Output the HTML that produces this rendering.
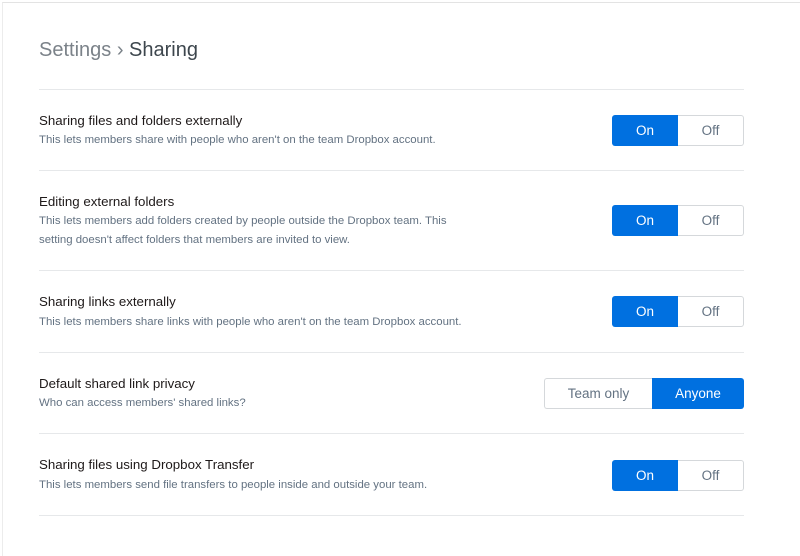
<!DOCTYPE html>
<html><head><style>
body{margin:0;width:800px;height:556px;background:#fff;font-family:"Liberation Sans",Arial,sans-serif;position:relative;overflow:hidden}
.frame{position:absolute;left:2px;top:2px;right:0;bottom:0;border-top:1px solid #e3e3e3;border-left:1px solid #ececec}
.h{position:absolute;left:39px;top:39px;font-size:20px;color:#7b8289}
.h b{font-weight:normal;color:#3d464d}
.hr{position:absolute;left:39px;width:705px;height:1px;background:#e6e8ea}
.t{position:absolute;left:39px;font-size:13.3px;color:#1e1919}
.d{position:absolute;left:39px;font-size:11.4px;color:#637282;line-height:19px}
.sw{position:absolute;height:31px;display:flex;box-sizing:border-box;font-size:13.5px}
.sw span{display:flex;align-items:center;justify-content:center;box-sizing:border-box}
.on{background:#0070e0;color:#fff;border-radius:3px 0 0 3px}
.off{border:1px solid #d5d8db;border-left:none;color:#637282;border-radius:0 3px 3px 0;background:#fff}
.lo{border:1px solid #d5d8db;border-right:none;color:#637282;border-radius:3px 0 0 3px}
.ro{background:#0070e0;color:#fff;border-radius:0 3px 3px 0}
</style></head><body>
<div class="frame"></div>
<div class="h">Settings › <b>Sharing</b></div>
<div class="hr" style="top:89px"></div>
<div class="t" style="top:113px">Sharing files and folders externally</div>
<div class="d" style="top:131px">This lets members share with people who aren't on the team Dropbox account.</div>
<div class="sw" style="left:612px;top:115px"><span class="on" style="width:66px">On</span><span class="off" style="width:66px">Off</span></div>
<div class="hr" style="top:170px"></div>
<div class="t" style="top:194px">Editing external folders</div>
<div class="d" style="top:212px">This lets members add folders created by people outside the Dropbox team. This<br>setting doesn't affect folders that members are invited to view.</div>
<div class="sw" style="left:612px;top:205px"><span class="on" style="width:66px">On</span><span class="off" style="width:66px">Off</span></div>
<div class="hr" style="top:270px"></div>
<div class="t" style="top:294px">Sharing links externally</div>
<div class="d" style="top:313px">This lets members share links with people who aren't on the team Dropbox account.</div>
<div class="sw" style="left:612px;top:296px"><span class="on" style="width:66px">On</span><span class="off" style="width:66px">Off</span></div>
<div class="hr" style="top:352px"></div>
<div class="t" style="top:376px">Default shared link privacy</div>
<div class="d" style="top:394px">Who can access members' shared links?</div>
<div class="sw" style="left:544px;top:378px"><span class="lo" style="width:108px">Team only</span><span class="ro" style="width:92px">Anyone</span></div>
<div class="hr" style="top:433px"></div>
<div class="t" style="top:457px">Sharing files using Dropbox Transfer</div>
<div class="d" style="top:476px">This lets members send file transfers to people inside and outside your team.</div>
<div class="sw" style="left:612px;top:460px"><span class="on" style="width:66px">On</span><span class="off" style="width:66px">Off</span></div>
<div class="hr" style="top:515px"></div>
</body></html>
